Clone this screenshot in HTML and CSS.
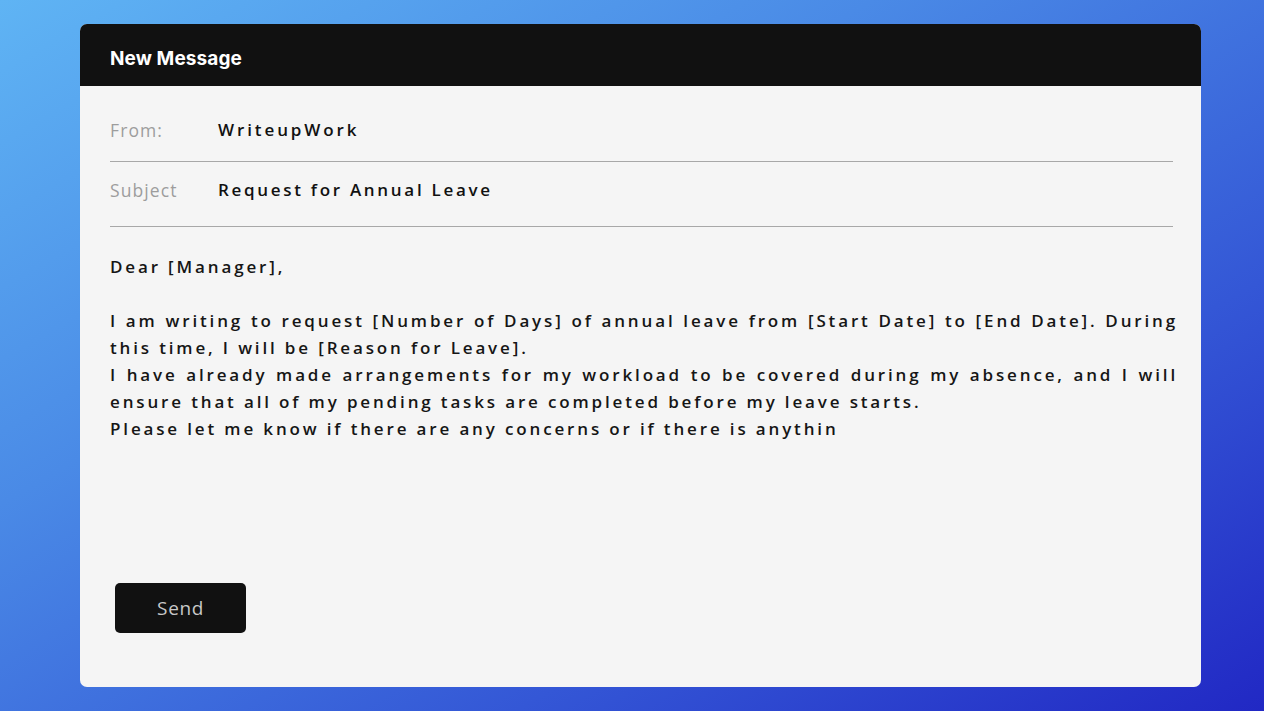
FILE: index.html
```html
<!DOCTYPE html>
<html lang="en">
<head>
<meta charset="utf-8">
<title>New Message</title>
<link rel="stylesheet" href="styles.css">
</head>
<body>
<div class="card">
  <div class="card-header">New Message</div>
  <div class="card-body">
    <div class="field field-from">
      <span class="label">From:</span>
      <span class="value">WriteupWork</span>
    </div>
    <div class="field field-subject">
      <span class="label">Subject</span>
      <span class="value value-subject">Request for Annual Leave</span>
    </div>
    <div class="message">
      <p class="greeting">Dear [Manager],</p>
      <p class="para">I am writing to request [Number of Days] of annual leave from [Start Date] to [End Date]. During this time, I will be [Reason for Leave].</p>
      <p class="para">I have already made arrangements for my workload to be covered during my absence, and I will ensure that all of my pending tasks are completed before my leave starts.</p>
      <p class="para">Please let me know if there are any concerns or if there is anythin</p>
    </div>
    <button class="send">Send</button>
  </div>
</div>
</body>
</html>
```

FILE: styles.css
```css
html, body {
  margin: 0;
  height: 100%;
}
body {
  width: 1264px;
  height: 711px;
  overflow: hidden;
  box-sizing: border-box;
  padding: 24px 0 0 80px;
  background: linear-gradient(150deg, #5fb4f4 0%, #4a8ae6 35%, #3457d6 70%, #2128c4 100%);
  font-family: "Open Sans", sans-serif;
}
.card {
  width: 1121px;
  height: 663px;
  border-radius: 7px;
  overflow: hidden;
  background: #f5f5f5;
  display: flex;
  flex-direction: column;
}
.card-header {
  height: 62px;
  box-sizing: border-box;
  padding: 7px 0 0 30px;
  background: #111111;
  color: #ffffff;
  display: flex;
  align-items: center;
  font-family: "Inter", sans-serif;
  font-weight: 700;
  font-size: 19px;
  letter-spacing: 0.1px;
  flex-shrink: 0;
}
.card-body {
  flex: 1;
  padding: 0 28px 0 30px;
  display: flex;
  flex-direction: column;
}
.field {
  display: flex;
  align-items: center;
  border-bottom: 1px solid #a8a8a8;
  line-height: 22px;
}
.field-from {
  padding: 33px 0 20px;
}
.field-subject {
  padding: 17px 0 25px;
}
.label {
  width: 108px;
  flex-shrink: 0;
  color: #9d9d9d;
  font-family: "Open Sans", sans-serif;
  font-size: 17.5px;
  font-weight: 400;
  letter-spacing: 1.1px;
}
.value {
  color: #111111;
  font-size: 17px;
  font-weight: 600;
  letter-spacing: 2.9px;
}
.value-subject {
  letter-spacing: 2.7px;
}
.message {
  padding-top: 26px;
  margin-right: -5px;
  color: #161616;
  font-size: 17px;
  font-weight: 600;
  letter-spacing: 2.85px;
  line-height: 27px;
}
.message p {
  margin: 0;
  text-align: justify;
}
.greeting {
  margin-bottom: 27px !important;
}
.send {
  margin-top: 141px;
  margin-left: 5px;
  width: 131px;
  height: 50px;
  border: none;
  border-radius: 5px;
  background: #111111;
  color: #c8c8c8;
  font-family: "Open Sans", sans-serif;
  font-size: 19px;
  font-weight: 400;
  letter-spacing: 0.6px;
  cursor: pointer;
}
```
